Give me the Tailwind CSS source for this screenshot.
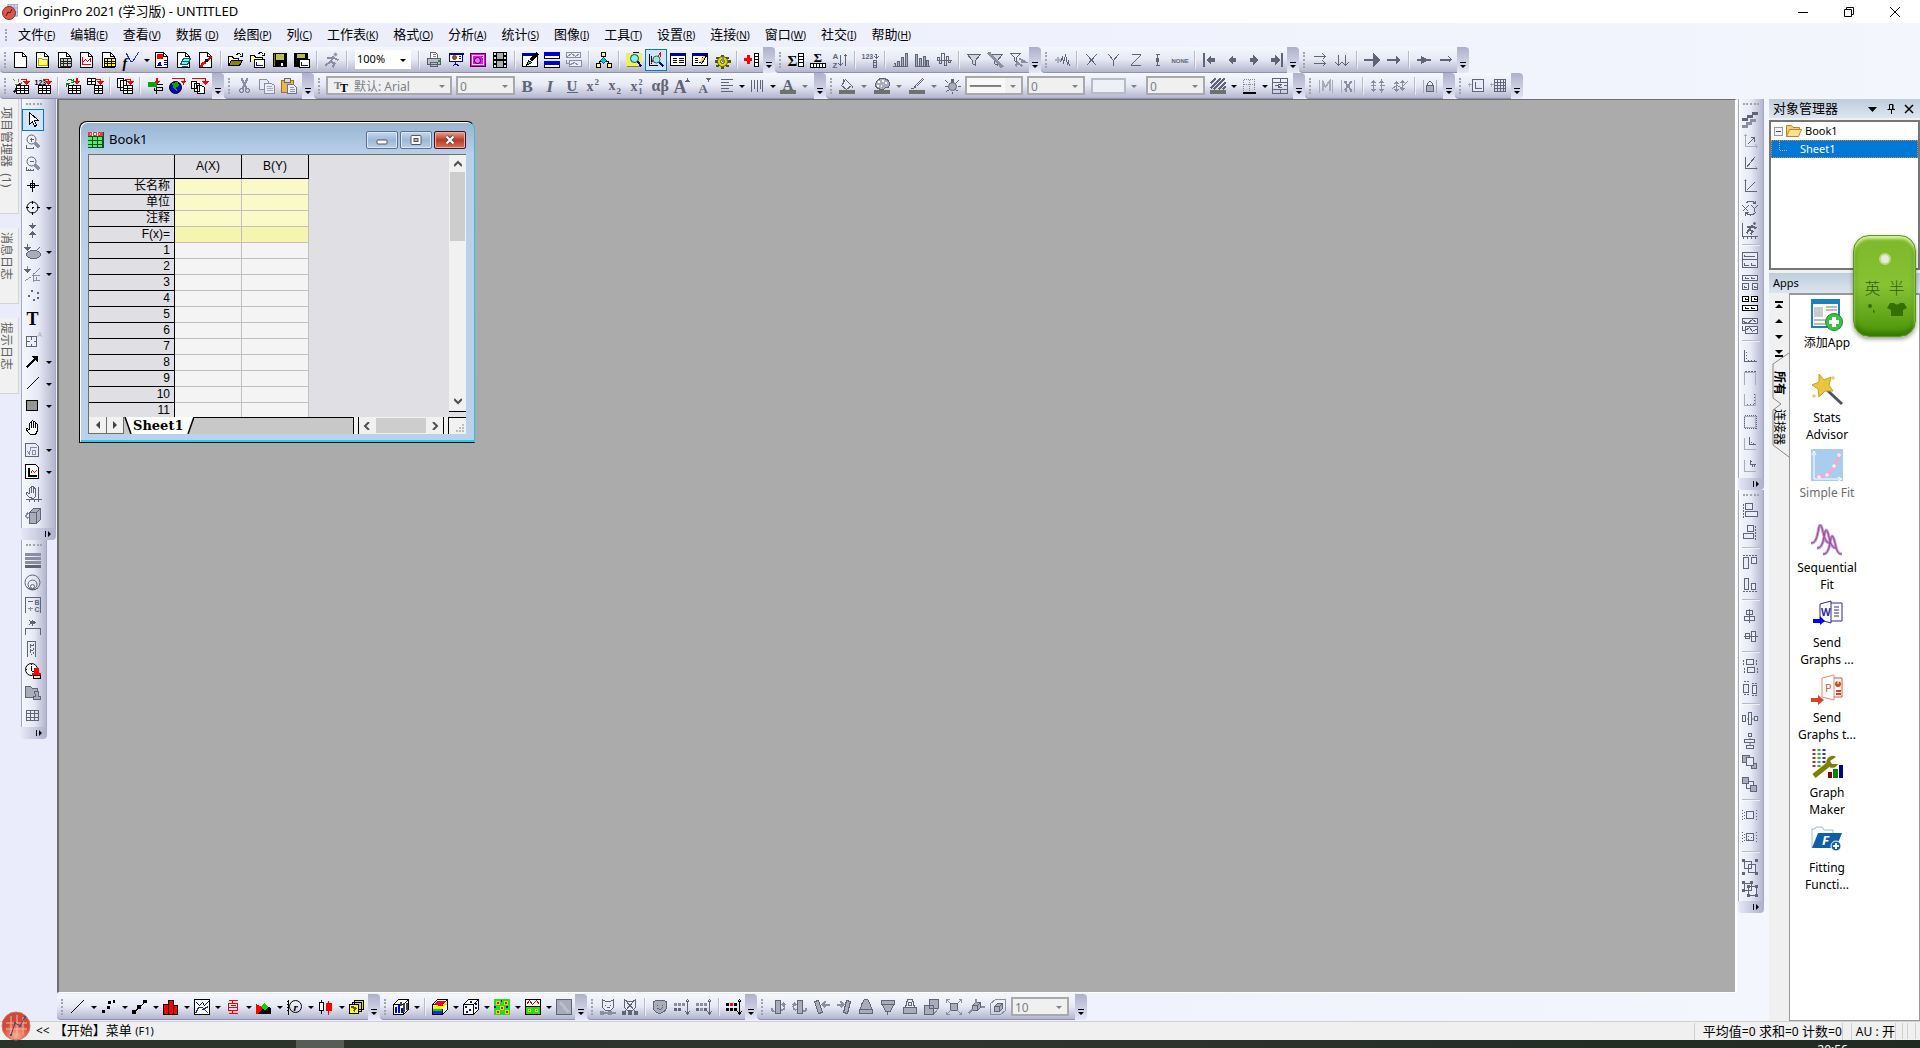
<!DOCTYPE html>
<html lang="zh-CN">
<head>
    <meta charset="UTF-8">
    <meta name="viewport" content="width=device-width, initial-scale=1.0">
    <title>OriginPro 2021 (学习版) - UNTITLED</title>
    <script src="https://cdn.jsdelivr.net/npm/@tailwindcss/browser@4"></script>
</head>
<body class="relative flex h-screen flex-col overflow-hidden bg-[#eaecfb] font-['Noto_Sans','Noto_Sans_CJK_SC',sans-serif] text-[12px] text-black">

    <!-- title bar -->
    <header class="flex h-[23px] shrink-0 items-center bg-white">
        <svg class="ml-0.5 size-4" viewBox="0 0 16 16"><rect x="6" y="0" width="10" height="12" fill="#c9d4ee" stroke="#8797c4"/><path d="M9 0V12M12 0V12M6 4H16M6 8H16" stroke="#8797c4" stroke-width=".6"/><circle cx="7" cy="9" r="6.5" fill="#d65a4c" stroke="#8e2a22"/><path d="M4 12 6 8 8 9 10 5" stroke="#5a1414" fill="none"/></svg>
        <h1 class="ml-[5px] text-[13px]">OriginPro 2021 (学习版) - UNTITLED</h1>
        <div class="ml-auto flex pr-0.5">
            <button aria-label="最小化" class="flex h-5 w-[46px] items-center justify-center"><svg class="size-2.5" viewBox="0 0 10 10"><path d="M0 5.500H10" stroke="#000"/></svg></button>
            <button aria-label="还原" class="flex h-5 w-[46px] items-center justify-center"><svg class="size-2.5" viewBox="0 0 10 10" fill="none" stroke="#000"><path d="M.5 2.500H7.500V9.500H.5ZM2.500 2.500V.5H9.500V7.500H7.500"/></svg></button>
            <button aria-label="关闭" class="flex h-5 w-[46px] items-center justify-center"><svg class="size-2.5" viewBox="0 0 10 10" stroke="#000"><path d="M0 0 10 10M10 0 0 10"/></svg></button>
        </div>
    </header>

    <!-- menu and toolbars -->
    <div class="shrink-0 bg-linear-to-r from-[#eaecfb] to-[#f3f6fd]">
        <nav id="menu" class="flex h-6 items-center gap-[15px] pl-[5px]"></nav>
        <div class="flex h-[26px] overflow-hidden" data-bars="row1"></div>
        <div class="flex h-[26px] overflow-hidden" data-bars="row2"></div>
    </div>

    <main class="flex min-h-0 flex-1">
        <!-- collapsed panels -->
        <div class="flex w-[21px] shrink-0 flex-col gap-3.5 text-[12px] leading-4 text-[#606060]">
            <button class="h-[115px] w-[19px] border-r border-b border-[#d4d4d4] bg-[#f1f1f1] pt-2 pr-1 text-left [text-orientation:sideways] [writing-mode:vertical-rl]">项目管理器&nbsp; (1)</button>
            <button class="h-[76px] w-[19px] border-r border-b border-[#d4d4d4] bg-[#f1f1f1] pt-1 pr-1 text-left [text-orientation:sideways] [writing-mode:vertical-rl]">消息日志</button>
            <button class="h-[76px] w-[19px] border-r border-b border-[#d4d4d4] bg-[#f1f1f1] pt-1 pr-1 text-left [text-orientation:sideways] [writing-mode:vertical-rl]">提示日志</button>
        </div>
        <div class="flex w-9 shrink-0 flex-col items-start" data-vbars="left"></div>

        <div class="flex min-w-0 flex-1 flex-col">
            <!-- workspace -->
            <section class="min-h-0 flex-1 border-t border-r-2 border-b border-l-2 border-t-[#6e6e6e] border-r-white border-b-white border-l-[#6e6e6e] bg-[#ababab]">
                <div class="relative mt-[21px] ml-5 flex h-[322px] w-[396px] flex-col rounded-t-lg border border-black border-r-[#2cc4d8] border-b-[#111] bg-linear-to-b from-[#98b4d2] via-[#b8d0ea] via-10% to-[#b9d1ea] px-2 pb-2 shadow-[inset_1px_1px_0_#fff,inset_0_-2px_0_#35c8e0]">
                    <div class="flex h-8 shrink-0 items-center pt-1">
                        <svg class="size-4" viewBox="0 0 16 16" shape-rendering="crispEdges"><rect width="16" height="16" fill="#174a2a"/><path d="M0 0H15V4H0Z" fill="#f33"/><path d="M0 5H4V8H0ZM5 5H9V8H5ZM10 5H14V8H10ZM0 9H4V12H0ZM5 9H9V12H5ZM10 9H14V12H10ZM0 13H4V15H0ZM5 13H9V15H5ZM10 13H14V15H10Z" fill="#5e6"/><path d="M2 1H3V3H2ZM6 1H8V3H6ZM11 1H12V3H11ZM4 0H5V4H4ZM9 0H10V4H9Z" fill="#fff"/></svg>
                        <h2 class="ml-[5px] text-[13px]">Book1</h2>
                        <div class="ml-auto flex gap-0.5">
                            <button aria-label="最小化" class="flex h-[18px] w-8 items-center justify-center rounded-xs border border-[#5d7290] bg-linear-to-b from-[#c5d8ee] via-[#9db7d5] to-[#b9d0ea] shadow-[inset_0_0_0_1px_#d8e6f5]"><svg class="h-2.5 w-3" viewBox="0 0 12 10"><rect x="1" y="5" width="10" height="4" rx="1" fill="#fff" stroke="#555"/></svg></button>
                            <button aria-label="最大化" class="flex h-[18px] w-8 items-center justify-center rounded-xs border border-[#5d7290] bg-linear-to-b from-[#c5d8ee] via-[#9db7d5] to-[#b9d0ea] shadow-[inset_0_0_0_1px_#d8e6f5]"><svg class="h-2.5 w-3" viewBox="0 0 12 10"><rect x="1" y=".5" width="10" height="9" rx="1" fill="#fff" stroke="#555"/><rect x="4" y="3.5" width="4" height="3" fill="#9db7d5" stroke="#555"/></svg></button>
                            <button aria-label="关闭" class="flex h-[18px] w-8 items-center justify-center rounded-xs border border-[#43141a] bg-linear-to-b from-[#e8a090] via-[#b83a26] to-[#d8705a] shadow-[inset_0_0_0_1px_#e8b0a4]"><svg class="h-2.5 w-3" viewBox="0 0 12 10"><path d="M2.500 1.500 9.500 8.500M9.500 1.500 2.500 8.500" stroke="#555" stroke-width="4"/><path d="M2.500 1.500 9.500 8.500M9.500 1.500 2.500 8.500" stroke="#fff" stroke-width="2"/></svg></button>
                        </div>
                    </div>
                    <div class="flex min-h-0 flex-1 flex-col border-t border-l border-[#6e6e6e] bg-[#e0dfe4]">
                        <div class="flex min-h-0 flex-1">
                            <div class="flex-1 overflow-hidden">
                                <table class="w-[220px] table-fixed border-separate border-spacing-0 font-['Liberation_Sans','Noto_Sans_CJK_SC',sans-serif] text-[12px] leading-[15px]">
                                    <thead>
                                        <tr class="h-6">
                                            <th class="w-[86px] border-r border-b border-black"></th>
                                            <th class="w-[67px] border-r border-b border-black font-normal">A(X)</th>
                                            <th class="w-[67px] border-r border-b border-black font-normal">B(Y)</th>
                                        </tr>
                                    </thead>
                                    <tbody id="sheet"></tbody>
                                </table>
                            </div>
                            <div class="flex w-[17px] flex-col items-center bg-[#f1f1f1]">
                                <button aria-label="向上" class="flex h-[17px] w-full items-center justify-center"><svg class="size-2" viewBox="0 0 8 8"><path d="M0 6 4 2 8 6" fill="none" stroke="#505050" stroke-width="2"/></svg></button>
                                <div class="h-[69px] w-[15px] bg-[#cdcdcd]"></div>
                                <button aria-label="向下" class="mt-auto flex h-[17px] w-full items-center justify-center"><svg class="size-2" viewBox="0 0 8 8"><path d="M0 2 4 6 8 2" fill="none" stroke="#505050" stroke-width="2"/></svg></button>
                                <div class="mt-0.5 h-1.5 w-full border-t border-black bg-[#e0dfe4]"></div>
                            </div>
                        </div>
                        <div class="flex h-[17px] shrink-0 bg-[#f1f1f1]">
                            <button aria-label="上一个" class="flex w-[18px] items-center justify-center border-r border-b border-[#6e6e6e]"><svg class="size-2" viewBox="0 0 8 8"><path d="M6 0V8L2 4Z" fill="#444"/></svg></button>
                            <button aria-label="下一个" class="flex w-[17px] items-center justify-center border-r border-b border-[#6e6e6e]"><svg class="size-2" viewBox="0 0 8 8"><path d="M2 0V8L6 4Z" fill="#444"/></svg></button>
                            <div class="flex flex-1 border-r border-black bg-[#c8c8c8]">
                                <svg class="h-[17px] w-2" viewBox="0 0 8 17"><path d="M1 0H8V17H7Z" fill="#fff"/><path d="M1 0 7 17" stroke="#000" stroke-width="1.500"/></svg>
                                <button class="bg-white px-px font-['DejaVu_Serif',serif] text-[13px] leading-[17px] font-bold">Sheet1</button>
                                <svg class="h-[17px] w-2.5" viewBox="0 0 10 17"><path d="M0 0H10L4 17H0Z" fill="#fff"/><path d="M10 0 4 17" stroke="#000" stroke-width="1.500"/></svg>
                                <div class="flex-1 border-t border-black"></div>
                            </div>
                            <div class="ml-1 flex w-[86px] items-center justify-between border-r border-l border-black px-1">
                                <svg class="size-2" viewBox="0 0 8 8"><path d="M6 0 2 4 6 8" fill="none" stroke="#505050" stroke-width="2"/></svg>
                                <div class="h-[15px] w-[50px] bg-[#cdcdcd]"></div>
                                <svg class="size-2" viewBox="0 0 8 8"><path d="M2 0 6 4 2 8" fill="none" stroke="#505050" stroke-width="2"/></svg>
                            </div>
                            <div class="ml-1 flex w-[18px] items-end justify-end border-t border-l border-black p-0.5"><svg class="size-2" viewBox="0 0 8 8" fill="#bbb"><path d="M6 0H8V2H6ZM3 3H5V5H3ZM6 3H8V5H6ZM0 6H2V8H0ZM3 6H5V8H3ZM6 6H8V8H6Z"/></svg></div>
                        </div>
                    </div>
                </div>
            </section>
            <div class="flex h-7 shrink-0 bg-linear-to-r from-[#eaecfb] to-[#f3f6fd] pt-px" data-bars="bottom"></div>
        </div>

        <div class="flex w-8 shrink-0 flex-col items-start bg-[#f3f6fd] pl-px" data-vbars="right"></div>

        <!-- right dock -->
        <aside class="flex w-[151px] shrink-0 flex-col bg-[#f0f0f0]">
            <div class="flex h-[19px] shrink-0 items-center bg-linear-to-b from-[#bfcddb] to-[#dbe5f0] pl-1 text-[13px]">
                <h2>对象管理器</h2>
                <button aria-label="菜单" class="mr-2 ml-auto"><svg class="size-2.5" viewBox="0 0 10 10"><path d="M0 3H9L4.500 8Z"/></svg></button>
                <button aria-label="固定" class="mr-2"><svg class="size-2.5" viewBox="0 0 10 10" fill="none" stroke="#000"><path d="M3.500 .5V5.500H7V.5ZM1.500 5.500H9M5.500 5.500V10M6.500 .5V5"/></svg></button>
                <button aria-label="关闭" class="mr-1.5"><svg class="size-2.5" viewBox="0 0 10 10" stroke="#000" stroke-width="1.500"><path d="M1 1 9 9M9 1 1 9"/></svg></button>
            </div>
            <div class="mt-0.5 h-[150px] shrink-0 border-2 border-[#767676] bg-white text-[11px]">
                <div class="flex h-[18px] items-center gap-[3px] pl-[3px]">
                    <svg class="size-[9px]" viewBox="0 0 9 9"><rect x=".5" y=".5" width="8" height="8" fill="#f4f4f4" stroke="#999"/><path d="M2 4.500H7" stroke="#2a4fa0"/></svg>
                    <svg class="h-3.5 w-4" viewBox="0 0 16 14"><path d="M.5 12.500V1.500H5.500L7 3.500H13.500V5.500" fill="#f5d06b" stroke="#b8872b"/><path d="M.5 12.500 3.500 5.500H15.500L12.500 12.500Z" fill="#fde08a" stroke="#b8872b"/></svg>
                    <span>Book1</span>
                </div>
                <div class="flex h-[18px] items-center border border-dotted border-[#e08a30] bg-[#0078d7] pl-1 text-white">
                    <svg class="h-4 w-6" viewBox="0 0 24 16"><path d="M3.500 0V9.500H12" fill="none" stroke="#c8b090" stroke-dasharray="1 1"/></svg>Sheet1
                </div>
            </div>
            <h2 class="mt-[3px] flex h-5 shrink-0 items-center bg-linear-to-b from-[#bfcddb] to-[#dbe5f0] pl-1 text-[11px]">Apps</h2>
            <div class="flex min-h-0 flex-1">
                <div class="flex w-5 shrink-0 flex-col items-center pt-1">
                    <button aria-label="顶部" class="flex h-4 items-center"><svg class="size-2" viewBox="0 0 8 8"><path d="M0 0H8V2H0ZM4 3 8 7H0Z"/></svg></button>
                    <button aria-label="向上" class="flex h-4 items-center"><svg class="size-2" viewBox="0 0 8 8"><path d="M4 2 8 6H0Z"/></svg></button>
                    <button aria-label="向下" class="flex h-4 items-center"><svg class="size-2" viewBox="0 0 8 8"><path d="M4 6 8 2H0Z"/></svg></button>
                    <button aria-label="底部" class="flex h-4 items-center"><svg class="size-2" viewBox="0 0 8 8"><path d="M0 6H8V8H0ZM4 5 8 1H0Z"/></svg></button>
                    <button class="relative h-11 w-5 text-[12px] leading-5 font-bold [text-orientation:sideways] [writing-mode:vertical-rl]"><svg class="absolute inset-0 h-11 w-5 overflow-visible" viewBox="0 0 20 44"><path d="M20-8 4 3V37L12 43" fill="none" stroke="#888"/></svg>所有</button>
                    <button class="relative h-11 w-5 text-[12px] leading-5 [text-orientation:sideways] [writing-mode:vertical-rl]"><svg class="absolute inset-0 h-11 w-5 overflow-visible" viewBox="0 0 20 44"><path d="M12-1 4 5V40L20 52" fill="none" stroke="#888"/></svg>连接器</button>
                </div>
                <div id="apps" class="flex-1 overflow-hidden border border-t-2 border-[#999] bg-white pt-px"></div>
            </div>
        </aside>
    </main>

    <!-- status bar -->
    <footer class="flex h-[19px] shrink-0 items-center border-t border-[#d0d0d0] bg-[#f0f0f0] text-[12px]">
        <span class="ml-9">&lt;&lt;</span>
        <span class="ml-1 text-[13px]">【开始】菜单 <span class="text-[11px]">(F1)</span></span>
        <span class="ml-auto border-r border-l border-[#d0d0d0] pl-2 text-[13px] leading-4">平均值<span class="text-[12px]">=0</span> 求和<span class="text-[12px]">=0</span> 计数<span class="text-[12px]">=0</span></span>
        <span class="ml-2 border-r border-l border-[#d0d0d0] pl-1 text-[13px] leading-4"><span class="text-[12px]">AU :</span> 开</span>
        <span class="ml-1.5 h-4 w-1.5 border-r border-l border-[#d0d0d0]"></span>
        <span class="mr-1 ml-1 h-4 w-1 border-r border-[#d0d0d0]"></span>
    </footer>
    <div class="flex h-2 shrink-0 overflow-hidden bg-linear-to-r from-[#27332b] via-[#2d3531] to-[#1e2a22]">
        <div class="ml-[296px] w-12 bg-[#545d57]"></div>
        <span class="mr-[72px] ml-auto pt-0.5 text-[12px] leading-4 text-white">20:56</span>
    </div>

    <!-- start orb -->
    <button aria-label="开始" class="absolute bottom-[7px] left-px size-[30px]"><svg viewBox="0 0 30 30"><defs><radialGradient id="orb" cy=".85"><stop offset="0" stop-color="#ffb08a"/><stop offset=".6" stop-color="#e8705a"/><stop offset="1" stop-color="#cf4a36"/></radialGradient></defs><circle cx="15" cy="15" r="14" fill="url(#orb)" stroke="#d8705c"/><path d="M10 5V25M16 4V25M22 6V24M5 12H26M5 18H26" stroke="#f6b5a4"/><path d="M10 24 14 12 19 15 24 6" fill="none" stroke="#5b4460"/><path d="M9 23H11V25H9ZM13 11H15V13H13ZM18 14H20V16H18ZM23 5H25V7H23Z" fill="#2b5a94"/></svg></button>

    <!-- input method badge -->
    <div class="absolute top-[235px] right-1 flex h-[102px] w-[63px] flex-col items-center rounded-2xl border border-[#5d9a10] bg-linear-to-b from-[#7db82a] via-[#86c232] to-[#4b9400] shadow-[inset_0_3px_3px_#d6f0a0,inset_0_-4px_5px_#367a00,0_2px_4px_#0006]">
        <span class="mt-[17px] size-3 rounded-full border-2 border-[#b8dc80] bg-[#e8e8e8]"></span>
        <span class="mt-2 flex gap-2 font-['Noto_Sans_CJK_SC',sans-serif] text-[16px] leading-7 font-light text-[#2c6200]"><span>英</span><span>半</span></span>
        <svg class="h-4 w-11" viewBox="0 0 44 16" fill="#337000"><circle cx="7" cy="5" r="2"/><path d="M10 8 12 11 10 12ZM27 2H31Q34 5 37 2H41L44 7 40 9V15H28V9L24 7Z"/></svg>
    </div>

    <script>
        // drawing helpers, icons use a 16x16 pixel grid
        // p = line through pixel centres, b = block on pixel edges, c = circle, t = letter, s = small label
        const p = (d, s = "currentColor", f = "none", w = 1) => `<path d="${d}" stroke="${s}" fill="${f}" stroke-width="${w}"/>`;
        const dash = (d, a = "2 1", s = "currentColor") => `<path d="${d}" stroke="${s}" fill="none" stroke-dasharray="${a}"/>`;
        const b = (d, f = "currentColor") => `<path transform="translate(-.5 -.5)" d="${d}" fill="${f}"/>`;
        const c = (x, y, r, s = "currentColor", f = "none") => `<circle cx="${x}" cy="${y}" r="${r}" stroke="${s}" fill="${f}" shape-rendering="auto"/>`;
        const t = (x, y, s, size, extra = "") => `<text x="${x}" y="${y}" font-size="${size}" font-family="Liberation Serif, serif" font-weight="bold" fill="currentColor" ${extra}>${s}</text>`;
        const s = (x, y, str, size, weight = "normal", fill = "currentColor") => `<text x="${x}" y="${y}" font-size="${size}" font-family="Liberation Sans, sans-serif" font-weight="${weight}" fill="${fill}">${str}</text>`;
        const doc = p("M1 0H9L13 4V15H1Z", "#000", "#fff") + p("M9 0V4H13", "#000");
        const table = p("M3 7H15V15H3ZM3 10H15M3 12H15M7 7V15M11 7V15", "#000", "#fff");
        const red = p("M7 1H13V5", "#f00") + b("M10 3H17L13.500 7Z", "#f00");
        const cube = p("M0 5 5 0H15V10L10 15H0ZM0 5H10V15M10 5 15 0", "#000", "#fff");
        const baseline = b("M0 12H16V16H0Z", "#70716c");
        const gray = "#a9acba";
        const mid = "#8a8ea0";
        const light = "#e8ecf8";
        const u = undefined;

        const icons = {
            newProj: doc,
            newFolder: doc + p("M3 6H6L7 7H12V13H3Z", "#aa0", "#ffff70"),
            newBook: doc + p("M3 6H14V14H3ZM3 9H14M3 11H14M6 6V14M10 6V14", "#222", "#ccc"),
            newGraph: doc + p("M3 4V12H11", "#f00") + p("M3 10 6 7 8 9 11 6V9", "#f00"),
            newMatrix: doc + p("M3 6H14V14H3ZM3 9H14M3 11H14M6 6V14M10 6V14", "#000", "#ff0"),
            func: p("M3 1 6 7Q9 12 11 6L15 0", "#22f") + t(-1, 15, "f", 14, 'font-style="italic"'),
            newLayout: doc + b("M3 2H9V7H3Z", "#f00") + b("M3 14 6 9 8 14Z", "#00c") + p("M9 8H12M9 10H12M9 12H12", "#00c"),
            newExcel: doc + p("M4 12 7 6H14L11 12ZM6 9H12M5 14H11", "#066", "#8ee"),
            newNotes: doc + p("M2 14 13 4", "#f00", "none", 2) + b("M7 7H10V10H7Z", "#000") + p("M4 9V14M2 11H7", "#f00"),
            open: p("M0 13V4H4L5 6H10V8", "#000", "#ff8") + p("M0 13 3 8H14L11 13Z", "#000", "#880") + p("M8 2Q11 0 13 3M14 0V4H11", "#000"),
            openTpl: p("M0 9V3H4L5 5H12V8", "#000", "#ff8") + p("M4 7H14V15H4Z", "#000", "#fff") + p("M6 9V13H12", "#00f") + p("M8 1Q11-1 13 2M14 0V3H11", "#000"),
            save: b("M1 1H15V15H1Z", "#000") + b("M4 2H12V8H4Z", "#bb5") + b("M2 2H3V14H2Z", "#880") + b("M9 11H11V14H9Z", "#fff"),
            saveTpl: b("M0 1H14V15H0Z", "#000") + b("M3 2H11V6H3Z", "#bb5") + p("M5 7H15V15H5Z", "#000", "#fff") + p("M7 9V13H13", "#00f"),
            run: c(11, 2, 1.5, gray, mid) + p("M9 4 6 9 10 11 8 15M9 5 14 8M8 5 3 6M6 9 1 13", mid, "none", 2),
            print: p("M4 6V0H9L11 2V6", "#667", "#fff") + p("M1 6H14V12H1ZM4 10H11V14H4Z", "#555c70", "#b8bccb") + b("M12 8H14V10H12Z", "#0a0") + p("M6 2H9M6 4H9", "#888"),
            slide: p("M1 1H14V9H1Z", "#00a", "#fff") + p("M0 1H15", "#00a", "none", 2) + p("M7 9V12M4 14 7 11 11 14", "#00a") + c(6, 5, 2, "#f00", "#0a0") + p("M10 4H12M10 6H12", "#00a"),
            camera: p("M0 1H15V14H0Z", "#505", "#f0f") + p("M2 3H13V12H2Z", "#fff") + c(7, 8, 3, "#000", "#f6f") + b("M12 5H13V6H12Z", "#fff"),
            film: b("M1 0H15V16H1Z", "#000") + b("M5 1H11V7H5ZM5 9H11V15H5Z", "#aaa") + b("M2 1H4V3H2ZM2 5H4V7H2ZM2 9H4V11H2ZM2 13H4V15H2ZM12 1H14V3H12ZM12 5H14V7H12ZM12 9H14V11H12ZM12 13H14V15H12Z", "#ddd"),
            edit: p("M0 1H15V14H0Z", "#000", "#fff") + b("M0 1H12V4H0Z", "#00a") + p("M15 1 8 8", "#000", "none", 3) + p("M4 13 6 8 9 10Z", "#000", "#0cc"),
            tile: p("M0 0H15V6H0ZM0 9H15V15H0Z", "#000", "#fff") + b("M0 0H16V4H0ZM0 9H16V13H0Z", "#00c"),
            tileG: p("M0 0H14V5H0ZM3 8H15V14H3Z", mid, light) + p("M1 4 5 1 9 4 13 1M4 12 8 10 12 13M0 7V11H2", mid),
            tree: p("M7 4V6M3 11V9L7 8M12 11V9L8 8", "#000") + p("M5 0H9V4H5ZM0 11H4V15H0ZM11 11H15V15H11Z", "#000", "#ff6") + p("M7 5 10 8 7 11 4 8Z", "#066", "#0cc"),
            find: b("M0 1H16V14H0Z", "#ee6") + p("M0 14H13", "#880") + p("M6 0H12", "#00a") + c(8, 6, 4, "#055", "#8ee") + p("M11 9 15 14", "#00a", "none", 2),
            graphFind: p("M1 1V13H9M3 3V11", "#000") + p("M3 11 5 6 7 8", "#f00") + p("M9 5 12 0V4", "#f00") + c(8, 7, 3.5, "#555", "#8ee") + p("M11 10 15 14", "#00a", "none", 2),
            list: p("M0 1H15V13H0Z", "#000", "#fff") + b("M0 1H16V4H0Z", "#00a") + p("M2 6H6M8 6H13M2 8H6M8 8H13M2 10H6M8 10H13", "#000"),
            listEdit: p("M0 1H15V13H0Z", "#000", "#fff") + b("M0 1H16V4H0Z", "#00a") + p("M2 6H5M2 8H5M2 10H5", "#000") + p("M13 3 8 11", "#000", "none", 3) + p("M12 4 8 10", "#fd0", "none", 2),
            gear: p("M3 4V6M8 2V4M13 4V6M0 9H3M13 9H16M3 14V12M13 14V12M8 14V16", "#550", "none", 3) + c(8, 9, 5, "#550", "#dd0") + c(8, 9, 2, "#550", "#fff") + p("M8 4V9", "#888", "none", 2),
            addCol: b("M0 6H8V9H0ZM3 3H6V12H3Z", "#f00") + p("M10 1H14V14H10ZM10 4H14M10 7H14M10 10H14", "#000", "#fff"),
            sigmaCol: t(-1, 13, "Σ", 15) + p("M10 1H15V14H10ZM10 4H15M10 7H15M10 10H15", "#000", "#fff"),
            sigmaRow: t(3, 9, "Σ", 13) + p("M0 11H15V15H0ZM3 11V15M6 11V15M9 11V15M12 11V15", "#000", "#fff"),
            sort: s(0, 6, "A", 8, "bold") + s(0, 15, "Z", 8, "bold") + p("M8 2V13M6 11 8 13 10 11M13 2V13M11 4 13 2 15 4"),
            n123: s(-1, 6, "123", 7, "bold") + p("M12 2H14V6M12 4 14 6 16 4M11 8H14V15H11ZM11 10H14M11 13H14"),
            bars1: p("M0 14H15M1 11H3V14M5 9H7V14H5ZM9 5H11V14H9ZM13 1H15V14H13Z", u, gray),
            bars2: p("M0 14H15M1 2H3V14H1ZM5 6H7V14H5ZM9 4H11V14H9ZM12 8H14V14H12Z", u, gray),
            bars3: p("M0 8H15M1 8V5H3V11H5V1H8V13H10V4H12V10H14V8"),
            filter: p("M1 2H14L9 8V13L6 11V8Z", u, "#d0d3e0"),
            filterX: p("M1 2H14L9 8V13L6 11V8Z", u, "#d0d3e0") + p("M0 0 14 15", mid, "none", 3),
            filterR: p("M0 1H10L6 5V10L4 8V5Z") + p("M9 6 14 9H10M5 14 7 10 12 14", mid, "none", 2),
            wave: p("M0 7H6M3 4V10", gray, "none", 2) + p("M6 10 8 4 9 11 11 2 13 12 14 8 15 14"),
            X: p("M2 2 12 13M12 2 2 13"),
            Y: p("M2 2 7 8 12 2M7 8V13"),
            Z: p("M3 2H12V3L3 12V13H12"),
            I: p("M7 2V13M5 2H9M5 13H9M6 6H8V9H6Z"),
            none: s(-1, 10, "NONE", 6, "bold"),
            first: b("M1 1H3V15H1ZM4 8 9 3V6H13V10H9V13Z"),
            prev: b("M4 8 9 3V6H12V10H9V13Z"),
            next: b("M12 8 7 3V6H4V10H7V13Z"),
            last: b("M13 1H15V15H13ZM12 8 7 3V6H3V10H7V13Z"),
            arrR: p("M1 4H13M10 1 13 4 10 7M1 11H13M10 8 13 11 10 14"),
            arrD: p("M4 2V13M1 10 4 13 7 10M11 2V13M8 10 11 13 14 10"),
            vec1: b("M0 7H10V9H0ZM9 1 16 8 9 15Z"),
            vec2: b("M1 7H11V9H1ZM10 4 15 8 10 12Z"),
            vec3: b("M1 7H15V9H1ZM5 4 13 8 5 12Z"),
            vec4: b("M2 7H13V9H2Z") + p("M10 4 13 7 10 10"),
            wand: p("M0 14 7 5", "#222", "none", 2) + p("M0 1 2 3M5 0V3M9 4 7 5M1 6H4", "#880") + red + table,
            imp123: s(-1, 6, "123", 7, "bold", "#000") + red + table,
            refresh: p("M1 3Q4-1 8 3M8 0V4H5M9 6Q5 9 1 5M1 8V5H4", "#080", "none", 1) + b("M11 0H13V3H15L12 7 9 3H11Z", "#f00") + table,
            tbls: p("M0 0H8V6H0ZM0 3H8M4 0V6", "#000", "#fff") + red + p("M7 7H15V15H7ZM7 10H15M7 12H15M11 7V15", "#000", "#fff"),
            multi: p("M0 0H6V9H0ZM3 2H9V12H3Z", "#000", "#fff") + red + p("M6 7H15V15H6ZM6 10H15M6 12H15M10 7V15", "#000", "#fff"),
            conn: p("M0 6H15", "#000") + b("M1 4H10V9H1Z", "#0a0") + b("M9 0H11V3H13L10 6 7 3H9Z", "#f00") + p("M7 9V12H15V9H9V15", "#000"),
            globe: c(6, 9, 6, "#000", "#00c") + b("M3 5 9 4 10 8 7 9 8 13 5 11Z", "#0a0") + p("M2 0H15V4", "#f00") + b("M12 3H17L14.500 7Z", "#f00"),
            copyR: p("M0 0H14V5", "#f00") + b("M11 3H18L14.500 7Z", "#f00") + p("M0 3H5V10H0ZM3 5H8V13H3ZM6 7H10L13 9V15H6Z", "#000", "#fff"),
            cut: p("M4 0 9 10M10 0 5 10", mid, "none", 2) + c(4, 12, 2) + c(10, 12, 2),
            copy: p("M0 1H7L9 3V11H0Z", mid, light) + p("M5 5H12L15 7V15H5Z", mid, light) + p("M7 8H12M7 10H13M7 12H13", gray),
            paste: p("M0 2H12V14H0Z", "#a07020", "#e8b84a") + p("M3 0H9V4H3Z", "#666", "#ddd") + p("M6 6H12L15 9V15H6Z", "#6070a0", "#eef") + p("M8 9H12M8 11H13M8 13H13", "#8a96c0"),
            bold: t(1, 13, "B", 17), ital: t(4, 13, "I", 17, 'font-style="italic"'), under: t(2, 12, "U", 15) + p("M2 14H13"),
            sup: t(0, 12, "x", 14) + t(8, 6, "2", 9), sub: t(0, 11, "x", 14) + t(8, 15, "2", 9),
            supsub: t(0, 12, "x", 14) + t(8, 6, "2", 8) + t(8, 15, "1", 8), ab: t(-1, 12, "αβ", 16),
            bigA: t(-1, 14, "A", 18) + b("M11 4 13.500 0 16 4Z"), smallA: t(2, 14, "A", 13) + b("M10 0H15L12.500 4Z"),
            align: p("M2 1H14M2 4H10M2 7H14M2 10H10M2 13H14"),
            valign: p("M2 1V13M5 1V10M8 1V13M11 1V10M13 1V13"),
            colorA: t(2, 11, "A", 15) + baseline,
            fill: p("M6 1 12 7 7 11 2 7ZM4 0V5M12 7 14 10", u, light) + baseline,
            palette: p("M1 6Q2 0 8 0T15 5Q15 10 11 9L9 11Q1 11 1 6Z", u, gray) + b("M4 3H6V5H4ZM8 2H10V4H8ZM3 7H5V9H3ZM11 4H13V6H11ZM7 7H8V9H7Z", "#fff") + baseline,
            pen: p("M13 0 6 7 5 9 7 8 14 1M4 10H1M5 9 3 11", u, light) + baseline,
            bulb: c(8, 8, 4, u, gray) + b("M7 1H10V5H7Z") + p("M1 2 4 5M14 2 11 5M0 8H3M13 8H16M2 13 5 11M14 13 11 11M8 13V15"),
            hatch: p("M0 5 5 0M0 10 10 0M3 11 14 0M8 11 15 4M12 11 15 8", u, "none", 2) + baseline,
            borders: dash("M2 1H13V12M2 1V12M8 1V12M2 6H13", "1 1", "#888") + p("M1 14H14", "#000", "none", 2),
            merge: p("M0 0H15V15H0ZM0 4H15M0 11H15M8 0V4M8 11V15M2 7H5M11 7H14M6 9V6H9L6 9H9"),
            M: p("M1 1V14M14 1V14", gray) + p("M4 12V3L7 8 11 3V12", gray, "none", 2),
            XX: p("M1 1V14M14 1V14", gray) + p("M4 3 11 12M11 3 4 12M4 3H6M9 3H11M4 12H6M9 12H11", mid, "none", 2),
            sp1: p("M0 7H5M9 7H14M3 3V11M11 2V12", mid) + b("M1 5 3.500 2 6 5ZM1 11H6L3.500 14ZM9 5 11.500 1 14 5ZM9 11H14L11.500 15Z", mid),
            sp2: p("M0 10 4 7 9 9 15 3M4 5V12M10 3V11", mid) + b("M2 6 4.500 3 7 6ZM2 11H7L4.500 14ZM8 5 10.500 2 13 5ZM8 10H13L10.500 13Z", mid),
            lock: p("M1 1V14M14 1V14", gray) + p("M4 7H11V13H4Z", u, gray) + p("M5 7V5Q7.500 1 10 5V7"),
            addL: p("M-1 6H3M1 4V8", gray) + p("M4 1H15V13H4ZM7 3V10H13", u, light),
            addG: p("M-1 6H3M1 4V8", gray) + p("M4 1H15V13H4ZM4 4H15M4 7H15M4 10H15M7 1V13M10 1V13M13 1V13"),
            // tools column
            cursor: p("M4 0V12L7 9 9 14 11 13 9 8H13Z", "#000", "#fff"),
            zoomIn: c(6, 5, 4.5) + p("M9 8 14 13", mid, "none", 3) + p("M4 5H8M6 3V7M1 10V14H8V12"),
            zoomOut: c(6, 5, 4.5) + p("M9 8 14 13", mid, "none", 3) + p("M4 5H8M1 10V14H8V12M3 12V14M5 12V14"),
            cross: p("M7 1V13M1 7H13M5 5H9V9H5Z"),
            target: c(7, 7, 5.5) + p("M7 0V3M7 11V14M0 7H3M11 7H14M7 6V8M6 7H8"),
            squeeze: p("M7 0V5M7 10V15") + b("M4 3H11L7.500 7ZM4 13H11L7.500 9Z"),
            regionE: `<ellipse cx="8" cy="10" rx="7" ry="4" fill="${gray}" stroke="currentColor"/>` + p("M2-1V3M10 7 14 3") + b("M-1 3H6L2.500 7Z"),
            regionC: p("M2-1V3M0 14 6 10 14 2M8 6V15M8 9H14M8 14H14M11 10V14", mid) + b("M-1 3H6L2.500 7Z"),
            dots: b("M3 7H5V9H3ZM6 2H8V4H6ZM12 4H14V6H12ZM12 9H14V11H12ZM8 11H10V13H8Z"),
            T: t(1, 14, "T", 18),
            annot: p("M1 4H11V14H1ZM1 9H4M8 9H11M6 4V7M6 11V14") + s(12, 4, "A", 7, "normal", gray),
            arrow: p("M1 13 10 4", "#000", "none", 2) + b("M6 2H13V9Z"),
            line: p("M1 13 13 1"),
            rect: p("M1 2H12V12H1Z", "#000", "#969696"),
            hand: p("M5 14Q0 9 1 8L4 9V3Q5 1 6 3V1Q7-1 8 1V2Q10 0 10 4Q12 2 12 5V10L10 14ZM6 3V7M8 2V7M10 4V7", "#000", "#fff"),
            eq: p("M0 1H10L13 4V14H0Z", u, light) + p("M2 9 4 12 5 5H11M7 8H10V12H7Z", mid),
            graphObj: p("M0 0H10L13 3V14H0Z", "#000", "#fff") + p("M3 3V11H11", "#000", "none", 2) + p("M5 9 7 6 9 8 11 6", "#f00"),
            handAx: p("M4 11Q0 7 1 6L4 7V2Q5 0 6 2V0H8V1L10 2V10L8 12ZM6 1V6M8 1V6", u, light) + p("M0 13H16M13 0V15M4 13V15M9 13V15"),
            block: p("M4 4 8 0H15V11L11 15H4ZM4 4H11V15M11 4 15 0", u, gray) + p("M3 4Q-2 8 3 10", mid, "none", 2),
            lines: b("M0 0H16V3H0ZM0 4H16V7H0ZM0 8H16V11H0Z", mid) + b("M0 12H16V15H0Z"),
            rings: c(7, 7, 7.5) + c(7, 9, 4.5) + c(7, 11, 2) + p("M2 12 5 14H10L13 12"),
            legend: p("M0 15V0H15V15M2 4H7") + p("M2 11H7M5 9V13", mid) + s(9, 7, "B", 7, "bold") + s(9, 14, "C", 7, "bold"),
            star: p("M7 0V6M4 1 10 5M10 1 4 5M4 3H10M0 15V9H15V15"),
            dice: p("M2 15V0H10V15M5 2V6M4 4H7M5 7V11M4 9H7M5 13H6") + dash("M8 2V14", "2 2"),
            stamp: c(6, 6, 6, "#000", "#fff") + p("M6 2V7L9 9M6 0V1M0 6H1M6 11V12", "#000") + b("M9 5H14V10H16V13H7V10H9Z", "#f00") + p("M7 12H15V15H8V12", "#000"),
            folder: p("M0 12V1H5L7 3H12V12Z", u, gray) + p("M9 6H13V11H15V14H8V11H10Z", u, gray),
            grid: p("M1 3H13V13H1ZM1 6H13M1 10H13M5 3V13M9 3V13"),
            // graph and layer columns
            steps: b("M10 0H16V3H10ZM5 3H11V6H5ZM0 6H6V9H0Z") + b("M8 7H14V10H8ZM4 10H10V13H4ZM0 13H6V16H0Z", mid),
            ax1: p("M3 0V12H15M1 2 3 0 5 2M13 10 15 12 13 14", gray) + p("M5 10 12 3M12 7V3H8"),
            ax2: p("M3 0V12H15") + p("M13 10 15 12 13 14", gray) + p("M4 11 12 1"),
            ax3: p("M3 1V13H14") + p("M1 3 3 1 5 3", gray) + p("M4 12 12 4"),
            xy: p("M3 3Q8-2 13 3M13 0V3H10M13 12Q8 17 3 12M3 15V12H6M0 5 6 11M6 5 0 11M9 5 12 8 15 5M12 8V11"),
            axrun: p("M0 0V14H15M1 14V16M5 14V16M9 14V16M13 14V16") + p("M10 3 7 7 10 9 8 12M10 4 14 6M9 4 5 5M7 7 4 11", u, "none", 2) + c(12, 1, 1, u, "currentColor"),
            lay1: p("M0 0H15V15H0ZM0 7H15M2 2V4H12M2 10V13H6M9 10V13H13", u, light),
            lay2: p("M0 1H15V6H0ZM0 9H6V15H0ZM10 9H15V15H10ZM3 2V4H6M9 2V4H12M2 11V13H4M12 11V13H14", u, light),
            lay3: p("M0 0H6V5H0ZM9 0H15V5H9ZM0 9H15V14H0ZM3 1V3H5M12 1V3H14M3 10V12H6M9 10V12H12", "#000", "#fff", 1),
            lay4: p("M0 0H15V5H0Z", u, light) + p("M1 3 5 5 10 1 14 4") + p("M3 8H15V15H3ZM0 7V12H3", u, light) + p("M3 12 7 9 10 13 15 10"),
            l1: p("M2 1V13H14M3 4H4M3 7H4M3 10H4M6 11V12M9 11V12M12 11V12"),
            l2: p("M2 14V2H13V14", gray) + dash("M2 1H14"),
            l3: p("M2 1V13H13V1", gray) + dash("M12 1V12H3", "1 2"),
            l4: p("M2 2H13V13H2Z", gray) + dash("M2 1H14V14H2Z", "1 1"),
            l5: p("M2 1V13H13", gray) + p("M7 0V8H13M9 5V6M11 6V7"),
            l6: p("M2 1V13H13", gray) + p("M8 1V6H13M7 3H9M10 5V8M12 5V8"),
            aL: dash("M1 0V15") + p("M3 0H10V6H3ZM3 8H15V13H3Z", u, light),
            aR: dash("M13 0V15") + p("M5 0H11V6H5ZM1 8H11V13H1Z", u, light),
            aT: dash("M0 0H15") + p("M1 2H6V13H1ZM9 2H14V8H9Z", u, light),
            aB: dash("M0 14H15") + p("M2 1H6V12H2ZM9 6H13V12H9Z", u, light),
            cV: p("M4 3H10V7H4ZM2 9H12V13H2Z", u, light) + p("M7 1V15"),
            cH: p("M3 4H7V9H3ZM9 2H13V12H9Z", u, light) + p("M1 7H15"),
            sW: p("M4 0H11V5H4ZM5 8H12V13H5Z", u, light) + dash("M1 0V6M14 0V6M2 8V14M15 8V14"),
            sH: p("M1 3H6V11H1ZM10 4H14V12H10Z", u, light) + dash("M1 0H7M1 13H7M9 2H15M9 14H15"),
            dH: p("M4 7H12", gray, "none", 2) + p("M0 4H3V10H0ZM6 1H9V13H6ZM12 5H15V9H12Z", u, light),
            dV: p("M7 4V12", gray, "none", 2) + p("M6 0H9V3H6ZM2 6H12V9H2ZM4 12H11V15H4Z", u, light),
            front: p("M0 0H7V7H0ZM9 8H14V13H9Z", u, gray) + p("M4 2H11V10H4Z", u, light),
            back: p("M4 4H11V11H4Z", u, light) + p("M0 0H6V6H0ZM8 8H14V14H8Z", u, gray),
            g1: p("M4 4H11V11H4Z", u, light) + dash("M0 2V13M2 4V12M14 2V13", "1 2"),
            g2: p("M4 4H11V11H4Z", u, light) + dash("M0 2V13M2 4V12M14 2V13M6 6V10M9 7V10", "1 2"),
            grp: p("M2 2H9V9H2ZM6 5H13V13H6Z", u, light) + b("M0 0H3V3H0ZM13 0H16V3H13ZM0 13H3V16H0ZM13 13H16V16H13Z"),
            ungrp: p("M2 2H9V9H2ZM6 5H14V14H6Z", u, light) + b("M0 0H3V3H0ZM8 0H11V3H8ZM0 8H3V11H0ZM5 4H8V7H5ZM13 4H16V7H13ZM5 13H8V16H5ZM13 13H16V16H13Z"),
            // 2D and 3D plots
            plLine: p("M0 14 13 1"),
            plDots: b("M1 11H4V14H1ZM6 7H9V10H6ZM7 2H10V5H7ZM12 1H14V4H12Z"),
            plLS: p("M1 13 7 8 13 2") + b("M0 11H4V15H0ZM5 6H9V10H5ZM11 1H15V4H11Z"),
            plBar: p("M0 5H5V15H0ZM5 1H10V15H5ZM10 6H14V15H10Z", "#000", "#f00"),
            plMulti: p("M0 0H15V15H0Z", "#000", "#fff") + p("M2 3 5 6 8 3 10 6 14 2M3 3V4", "#00f") + p("M1 14 4 8H8L14 14M14 7 8 10", "#22a"),
            plBox: p("M3 1H12M7 1V4M3 4H12V8H3ZM3 8H12V11H3ZM7 11V14M3 14H12M5 6H10", "#f00"),
            plArea: b("M0 6 5 11 9 6 15 9V15H0Z", "#000") + b("M0 5V15H1L8 9Z", "#f00") + b("M5 8 8 4 12 8 9 11Z", "#0d0"),
            plPolar: p("M1 0V15M-1 2H1M-1 5H1M-1 8H1M-1 11H1") + c(8, 7, 6) + t(6, 11, "r", 11, 'font-style="italic"'),
            plStock: p("M1 3H5V11H1Z", "#000", "#fff") + p("M3 0V3M3 11V14") + p("M10 1V15", "#f00") + b("M8 4H14V12H8Z", "#f00"),
            plTpl: p("M5 1H14V10H5ZM3 3H12V12H3Z", "#000", "#dd0") + p("M0 5H9V14H0Z", "#000", "#ff0") + p("M2 7 6 9 4 12", "#555", "none", 2),
            bars3d: cube + p("M2 7V13M5 5V13M8 8V13", "#00f", "none", 2) + p("M10 3V12M7 2V6M13 3V10", "#444", "none", 2),
            surf3d: cube + b("M1 6 6 2H14L10 7Z", "#f00") + b("M1 7H10L15 3V6L10 10H1Z", "#ff0") + b("M1 10H10V12H1Z", "#0d0") + b("M1 12H10V15H1Z", "#22f"),
            scat3d: cube + b("M2 7H4V9H2ZM6 10H8V12H6ZM7 2H9V4H7ZM12 4H14V6H12ZM3 12H5V14H3ZM12 8H14V10H12Z", "#00f"),
            cont: b("M0 0H16V16H0Z", "#2d2") + p("M2 2H5V5H2ZM10 2H13V5H10ZM6 7H9V10H6ZM2 11H5V14H2ZM11 11H14V14H11Z", "#dd0", "#f00") + b("M7 1H8V3H7ZM0 7H2V9H0ZM12 7H14V9H12Z", "#00f"),
            prof: p("M0 0H15V15H0Z", "#000", "#fff") + p("M1 5 4 1 7 5 11 1 14 5", "#f00") + b("M0 8H16V16H0Z", "#2d2") + p("M3 10H5V12H3ZM10 10H12V12H10Z", "#dd0", "#f00") + p("M0 7H15V15H0Z", "#000"),
            img: p("M0 0H15V15H0Z", u, gray) + p("M4 3 12 13", "#bcbfcd", "none", 3),
            mask: p("M2 0 5 2H10L13 0V8L10 11H5L2 8Z", u, light) + p("M5 5V6M10 5V6M6 8H9") + b("M0 12H4V16H0ZM4 13H8V15H4ZM8 12H12V16H8ZM12 13H16V15H12Z", mid),
            maskX: p("M2 0 5 2H10L13 0V8L10 11H5L2 8ZM2 0 13 12M13 0 2 12", u, light) + b("M0 12H4V16H0ZM6 12H10V16H6ZM12 12H16V16H12Z"),
            shield: p("M1 2 4 1H11L14 2V9Q12 13 7 14Q2 13 1 9Z", u, gray) + p("M5 5V6M10 5V6M5 9 8 10 10 8"),
            rows1: b("M0 4H3V7H0ZM4 4H7V7H4ZM8 4H11V7H8Z", mid) + b("M0 9H3V12H0ZM4 9H7V12H4Z") + p("M13 1V14M11 3 13 0 15 3M11 12 13 15 15 12"),
            rows2: b("M0 4H3V7H0ZM4 4H7V7H4ZM8 4H11V7H8ZM4 9H7V12H4Z", mid) + b("M0 9H3V12H0ZM8 9H11V12H8Z") + p("M13 1V14M11 3 13 0 15 3M11 12 13 15 15 12"),
            rows3: b("M0 4H3V7H0ZM8 4H11V7H8ZM0 9H3V12H0ZM4 9H7V12H4ZM8 9H11V12H8Z") + b("M4 4H7V7H4Z", "#f00") + p("M13 1V14M11 3 13 0 15 3M11 12 13 15 15 12"),
            rotL: p("M5 1H10V14H5Z", u, gray) + p("M1 8Q1 12 4 11M11 11Q16 9 13 5M11 6 13 4 15 6", mid, "none", 2),
            rotR: p("M5 1H10V14H5Z", u, gray) + p("M14 8Q14 12 11 11M4 11Q-1 9 2 5M0 6 2 4 4 6", mid, "none", 2),
            tiltL: p("M0 2 4 1 8 13 4 14Z", u, gray) + p("M8 5H15M11 2 8 5 11 8", mid, "none", 2),
            tiltR: p("M10 1 14 2 11 14 7 13Z", u, gray) + p("M0 5H7M4 2 7 5 4 8", mid, "none", 2),
            trap1: p("M6 0H9L12 5 13 10H2L3 5ZM1 10H14V14H1Z", u, gray),
            trap2: p("M1 1H14V5H1ZM2 5H13L10 12H5ZM7 12V15", u, gray),
            trap3: p("M5 0H10L12 8H3ZM6 3H9V6H6Z", u, light) + p("M1 8H14V14H1Z", u, gray),
            box1: p("M5 0H14V9H5ZM0 6H9V15H0Z", u, gray) + p("M9 15 14 9", mid),
            expand: p("M4 4H11V11H4Z", u, gray) + p("M0 0 4 4M15 0 11 4M0 15 4 11M15 15 11 11M0 3V0H3M12 0H15V3M0 12V15H3M12 15H15V12", mid),
            box2: p("M4 6 7 3H12V8L9 11H4ZM4 6H9V11M9 6 12 3", u, gray) + p("M0 14 4 10M7-1V3M12 7H16", mid, "none", 2),
            box3: p("M0 4 5 0H15V11L10 15H0Z", mid) + p("M4 7 7 4H12V9L9 12H4ZM4 7H9V12M9 7 12 4", u, gray)
        };

        const caret = `<svg class="mr-1 size-2 shrink-0" viewBox="0 0 8 8"><path d="M1 3H7L4 6Z" fill="currentColor"/></svg>`;
        const combo = (label, text, cls, extra = "") => `<label class="flex h-[19px] items-center ${cls}">${extra}<select aria-label="${label}" class="h-full min-w-0 flex-1 appearance-none pl-0.5"><option>${text}</option></select>${caret}</label>`;
        const off = "border-2 border-[#a9a9a9] bg-[#f0f0f0] text-[12px] text-[#7c8088]";
        const combos = {
            "@zoom": combo("缩放", "100%", "mx-1 w-14 bg-white text-[11px]"),
            "@font": combo("字体", "默认: Arial", off + " mr-1 ml-0.5 w-[126px]", `<svg class="ml-1 h-4 w-5" viewBox="0 0 20 16"><text x="2" y="11" font-size="11" font-family="Liberation Serif" font-weight="bold" fill="#777">T</text><text x="8" y="14" font-size="12" font-family="Liberation Serif" font-weight="bold">T</text></svg>`),
            "@size": combo("字号", "0", off + " mr-0.5 w-[59px]"),
            "@style": `<button aria-label="线型" class="mr-1 ml-0.5 flex h-[19px] w-[58px] items-center border-2 border-[#a9a9a9] bg-[#f0f0f0] text-[#7c8088]"><svg class="mr-1 h-[15px] flex-1 bg-[#f8f8f8]" viewBox="0 0 40 15"><path d="M3 8H36" stroke="#000"/></svg>${caret}</button>`,
            "@width": combo("线宽", "0", off + " w-[58px]"),
            "@color": `<button aria-label="颜色" class="mr-1 ml-1.5 flex items-center gap-1 text-[#7c8088]"><span class="h-4 w-[35px] border-2 border-[#b8bac4] bg-[#eef0f8]"></span>${caret}</button>`,
            "@ten": combo("大小", "10", off + " mr-1.5 ml-0.5 w-[58px]")
        };

        // "." = disabled colour, ">" = drop-down arrow, "+" = wide drop-down arrow, "!" = pressed, "|" = separator
        const bars = {
            row1: [
                "newProj newFolder newBook newGraph newMatrix func> newLayout newExcel newNotes | open openTpl save saveTpl | .run | @zoom | print slide camera film | edit tile .tileG | tree | find graphFind! list listEdit gear | addCol",
                "sigmaCol sigmaRow .sort | .n123 | .bars1 .bars2 .bars3 | .filter .filterX .filterR",
                ".wave | .X .Y .Z .I .none | .first .prev .next .last",
                ".arrR .arrD | .vec1 .vec2 | .vec3 .vec4"
            ],
            row2: [
                "wand imp123 | refresh tbls | multi | conn globe copyR",
                ".cut .copy paste",
                "@font @size .bold .ital .under .sup .sub .supsub .ab .bigA .smallA .align> .valign> .colorA+",
                ".fill+ .palette+ .pen+ .bulb @style @width @color @size .hatch> .borders> .merge",
                ".M .XX | .sp1 .sp2 | .lock",
                ".addL .addG"
            ],
            bottom: [
                "plLine> plDots> plLS> plBar> plMulti> plBox> plArea> plPolar> plStock> plTpl",
                "bars3d> | surf3d> scat3d> cont> prof> .img",
                ".mask .maskX | .shield .rows1 .rows2 | rows3",
                ".rotL .rotR .tiltL .tiltR .trap1 .trap2 .trap3 .box1 .expand .box2 .box3 @ten"
            ]
        };
        const vbars = {
            left: [
                "cursor! .zoomIn .zoomOut cross target> .squeeze .regionE> .regionC> .dots T .annot arrow> line> rect> hand .eq> graphObj> .handAx .block",
                ".lines .rings .legend .star .dice stamp .folder .grid"
            ],
            right: [
                ".steps .ax1 .ax2 .ax3 .xy .axrun | .lay1 .lay2 lay3 .lay4 | .l1 .l2 .l3 .l4 .l5 .l6",
                ".aL .aR | .aT .aB | .cV .cH | .sW .sH | .dH .dV .front .back | .g1 .g2 | .grp .ungrp"
            ]
        };

        function tool(tok, sep) {
            if (tok === "|") return sep;
            if (combos[tok]) return combos[tok];
            const name = tok.replace(/[.>!+]/g, "");
            const color = tok[0] === "." ? "text-[#5f6476]" : "text-black";
            const on = tok.includes("!") ? "border border-[#0078d7] bg-[#cfe6f8]" : "";
            let drop = "";
            if (tok.includes(">")) drop = `<svg class="h-2 w-[9px] shrink-0" viewBox="0 0 9 8"><path d="M2 3H8L5 6Z" fill="#000"/></svg>`;
            if (tok.includes("+")) drop = `<svg class="h-2 w-[13px] shrink-0" viewBox="0 0 13 8"><path d="M3 3H9L6 6Z" fill="#777"/></svg>`;
            return `<button aria-label="${name}" class="flex h-[22px] shrink-0 items-center ${color}"><span class="flex size-[22px] items-center justify-center ${on}"><svg class="size-4 shrink-0 overflow-visible" viewBox="0 0 16 16" shape-rendering="crispEdges"><g transform="translate(.5 .5)">${icons[name]}</g></svg></span>${drop}</button>`;
        }
        const hsep = `<span class="mx-[3px] h-[18px] w-0.5 shrink-0 border-l border-[#b9bac8] bg-white/60"></span>`;
        const vsep = `<span class="my-[3px] ml-[3px] h-0.5 w-[18px] border-t border-[#b9bac8] bg-white/60"></span>`;

        document.querySelectorAll("[data-bars]").forEach(el => {
            const pad = el.dataset.bars === "row2" ? "pr-0.5" : "";
            el.innerHTML = bars[el.dataset.bars].map(row => `<div class="flex h-[26px] shrink-0">
                <div class="flex items-center rounded-l-sm border-b border-[#8f91ae] bg-linear-to-b from-[#f6f8fe] via-[#e6e8f4] to-[#b4b6cf] ${pad}">
                    <span class="mx-1 h-4 w-0.5 border-l-2 border-dotted border-[#a3a3ae]"></span>${row.split(" ").map(k => tool(k, hsep)).join("")}
                </div>
                <button aria-label="工具栏选项" class="flex w-3 items-end justify-center rounded-r-sm bg-linear-to-b from-[#aeb0cb] to-[#e6e7f7] pb-1"><svg class="h-2 w-1.5" viewBox="0 0 6 8"><path d="M0 1H6V2H0ZM0 4H6L3 7Z"/></svg></button>
            </div>`).join("");
        });
        document.querySelectorAll("[data-vbars]").forEach(el => {
            el.innerHTML = vbars[el.dataset.vbars].map((col, i) => {
                const wide = el.dataset.vbars === "left" && i === 0;
                return `<div class="${wide ? "w-[35px]" : "w-[26px]"}">
                <div class="flex flex-col border-r border-l border-[#a6a8c2] bg-linear-to-r from-[#f6f8fe] via-[#e6e8f4] to-[#b4b6cf] pb-px">
                    <span class="my-1 ml-1 h-0.5 w-4 border-t-2 border-dotted border-[#a3a3ae]"></span>${col.split(" ").map(k => tool(k, vsep)).join("")}
                </div>
                <button aria-label="工具栏选项" class="flex h-3 w-full items-center justify-end rounded-b-sm bg-linear-to-r from-[#e6e7f7] to-[#aeb0cb] pr-1"><svg class="h-1.5 w-2" viewBox="0 0 8 6"><path d="M1 0H2V6H1ZM4 0V6L7 3Z"/></svg></button>
            </div>`;
            }).join("");
        });

        const menus = [["文件", "F"], ["编辑", "E"], ["查看", "V"], ["数据 ", "D"], ["绘图", "P"], ["列", "C"], ["工作表", "K"], ["格式", "O"], ["分析", "A"], ["统计", "S"], ["图像", "I"], ["工具", "T"], ["设置", "R"], ["连接", "N"], ["窗口", "W"], ["社交", "I"], ["帮助", "H"]];
        document.getElementById("menu").innerHTML = `<span class="-mr-1 h-3 w-0.5 border-l-2 border-dotted border-[#a3a3ae]"></span>` +
            menus.map(m => `<button class="text-[13px] whitespace-pre">${m[0]}<span class="text-[10px]">(<u>${m[1]}</u>)</span></button>`).join("");

        const heads = ["长名称", "单位", "注释", "F(x)=", 1, 2, 3, 4, 5, 6, 7, 8, 9, 10, 11];
        document.getElementById("sheet").innerHTML = heads.map((h, i) => {
            const bg = i < 3 ? "bg-[#fafac8]" : i === 3 ? "bg-[#f6f5b0]" : "bg-[#f4f4f4]";
            return `<tr class="h-4"><th class="h-4 border-r border-b border-black pr-1 text-right font-normal">${h}</th><td class="border-r border-b border-[#c0c0c0] ${bg}"></td><td class="border-r border-b border-[#c0c0c0] ${bg}"></td></tr>`;
        }).join("");

        const word = (col, ch) => `<path d="M9 5 20 2V24L9 21Z" fill="#fff" stroke="${col}"/><path d="M20 4H31V22H20M23 8H28M23 11H28M23 14H28M23 17H28" fill="none" stroke="${col}"/><text x="10" y="17" font-size="10" font-weight="bold" fill="${col}" font-family="Noto Sans">${ch}</text>`;
        const peaks = "M0 19Q5 20 7 8 9-6 12 8 14 20 20 19M6 24Q11 25 13 13 15-1 18 13 20 25 26 24M12 30Q17 31 19 19 21 5 24 19 26 31 31 30";
        const apps = [
            ["添加App", `<path d="M1 1H28V28H1Z" fill="#fff" stroke="#1683bd" stroke-width="2"/><path d="M0 0H29V5H0Z" fill="#1683bd"/><path d="M3 8H12V18H3Z" fill="#c8ccd0"/><path d="M15 8H26M15 11H26M3 21H14M3 25H14" stroke="#bbb" stroke-width="2"/><circle cx="23" cy="23" r="8.500" fill="#3cc040" stroke="#1f8a28"/><path d="M23 18V28M18 23H28" stroke="#fff" stroke-width="4"/>`],
            ["Stats Advisor", `<path d="M16 16 31 30" stroke="#50545e" stroke-width="3"/><path d="M8 0 13 6 20 3 18 11 22 17 14 17 8 23 7 15 1 11 8 8Z" fill="#eac63c" stroke="#caa020"/><path d="M22 2V6M20 4H24M3 20V24M1 22H5" stroke="#e8b84a"/>`],
            ["Simple Fit", `<path d="M0 0H32V32H0Z" fill="#a8cdee"/><path d="M3 30V4M3 30H30M1 6 3 2 5 6M27 28 31 30 27 32" stroke="#fff" fill="none"/><path d="M6 28Q20 27 24 16L29 4" stroke="#f7a8d0" stroke-width="3" fill="none"/><path d="M8 26V30M6 28H10M16 24V28M14 26H18M23 15V19M21 17H25M28 4V8M26 6H30" stroke="#fff"/>`],
            ["Sequential Fit", `<path d="${peaks}" fill="none" stroke="#a9a0ee" stroke-width="3"/><path d="${peaks}" fill="none" stroke="#c03868"/>`],
            ["Send Graphs ...", word("#2c2c8c", "W") + `<path d="M2 20H9V17L14 22 9 26V24H2Z" fill="#00f"/>`],
            ["Send Graphs t...", `<path d="M11 4 23 1V26L11 23Z" fill="#fff" stroke="#e08a74"/><path d="M23 4H31V23H23" fill="none" stroke="#d9573a"/><path d="M25 17H30M25 20H30" stroke="#d24726" stroke-width="2"/><circle cx="27" cy="10" r="3" fill="#d24726"/><path d="M27 10V7H30" stroke="#fff" fill="none"/><text x="14" y="18" font-size="11" fill="#d9573a" font-family="Noto Sans">P</text><path d="M0 24H7V21L13 26 7 31V28H0Z" fill="#d24726"/>`],
            ["Graph Maker", `<g stroke-width="3" stroke-dasharray="2 2"><path d="M3 0V18" stroke="#a33"/><path d="M8 0V18" stroke="#3a3"/><path d="M13 0V14" stroke="#33a"/></g><path d="M3 27 18 15" stroke="#808000" stroke-width="5"/><path d="M25 8A6 6 0 1 0 27 15L21 15 19 12Z" fill="#808000"/><path d="M17 23H21V29H17Z" fill="#800"/><path d="M22 20H27V29H22Z" fill="#080"/><path d="M28 16H32V29H28Z" fill="#008"/>`],
            ["Fitting Functi...", `<path d="M1 24V5H4L5 3H11L13 6H22V10" fill="#fff" stroke="#9bbcd8"/><path d="M7 9H31L25 24H1Z" fill="#0f5fa8"/><text x="11" y="21" font-size="13" font-weight="bold" font-style="italic" fill="#fff" font-family="Noto Sans">F</text><circle cx="25" cy="22" r="5" fill="#0f5fa8" stroke="#fff"/><path d="M25 19V25M22 22H28" stroke="#fff" stroke-width="2"/>`]
        ];
        document.getElementById("apps").innerHTML = apps.map((a, i) => `<button class="flex h-[75px] w-[74px] flex-col items-center pt-[3px] text-[12px] leading-[17px] ${i === 2 ? "text-[#6d6d6d]" : ""}"><svg class="mb-[3px] size-8 shrink-0" viewBox="0 0 32 32">${a[1]}</svg><span class="w-[66px]">${a[0]}</span></button>`).join("");
    </script>
</body>
</html>
